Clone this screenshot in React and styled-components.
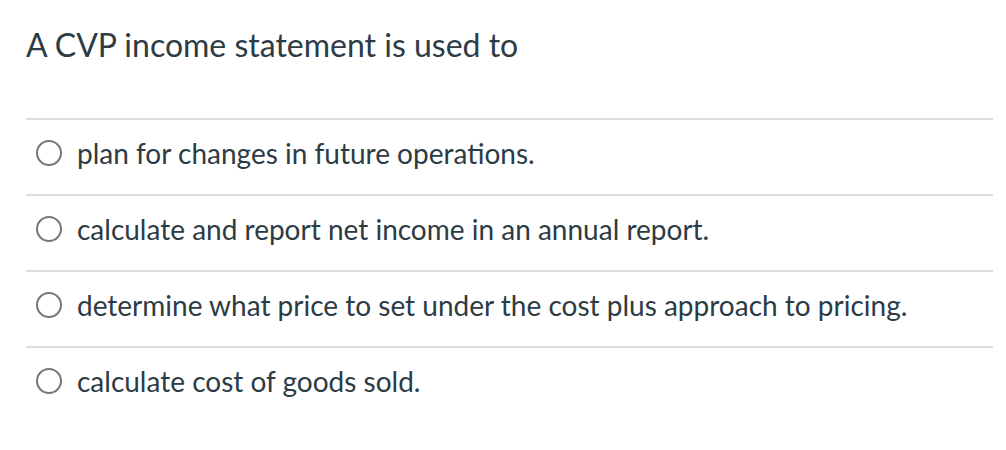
import React from 'react';
import styled, { createGlobalStyle } from 'styled-components';

const GlobalStyle = createGlobalStyle`
  body {
    margin: 0;
    background: #fff;
    font-family: Lato, "Noto Sans", sans-serif;
    color: #2d3b45;
  }
`;

const Question = styled.div`
  width: 967px;
  padding-left: 26px;
`;

const Prompt = styled.div`
  height: 118px;
  padding-top: 26px;
  box-sizing: border-box;
  font-size: 32px;
  line-height: 38px;
`;

const Answer = styled.label`
  display: flex;
  align-items: center;
  gap: 15px;
  height: 76px;
  box-sizing: border-box;
  padding-left: 10px;
  padding-bottom: 8px;
  border-top: 2px solid #dddddd;
  font-size: 28px;
  cursor: pointer;
`;

const Radio = styled.span`
  width: 26px;
  height: 26px;
  box-sizing: border-box;
  border: 2px solid #777777;
  border-radius: 50%;
  flex-shrink: 0;
`;

const answers = [
  'plan for changes in future operations.',
  'calculate and report net income in an annual report.',
  'determine what price to set under the cost plus approach to pricing.',
  'calculate cost of goods sold.',
];

export default function App() {
  return (
    <>
      <GlobalStyle />
      <Question>
        <Prompt>A CVP income statement is used to</Prompt>
        {answers.map((a) => (
          <Answer key={a}>
            <Radio />
            {a}
          </Answer>
        ))}
      </Question>
    </>
  );
}
